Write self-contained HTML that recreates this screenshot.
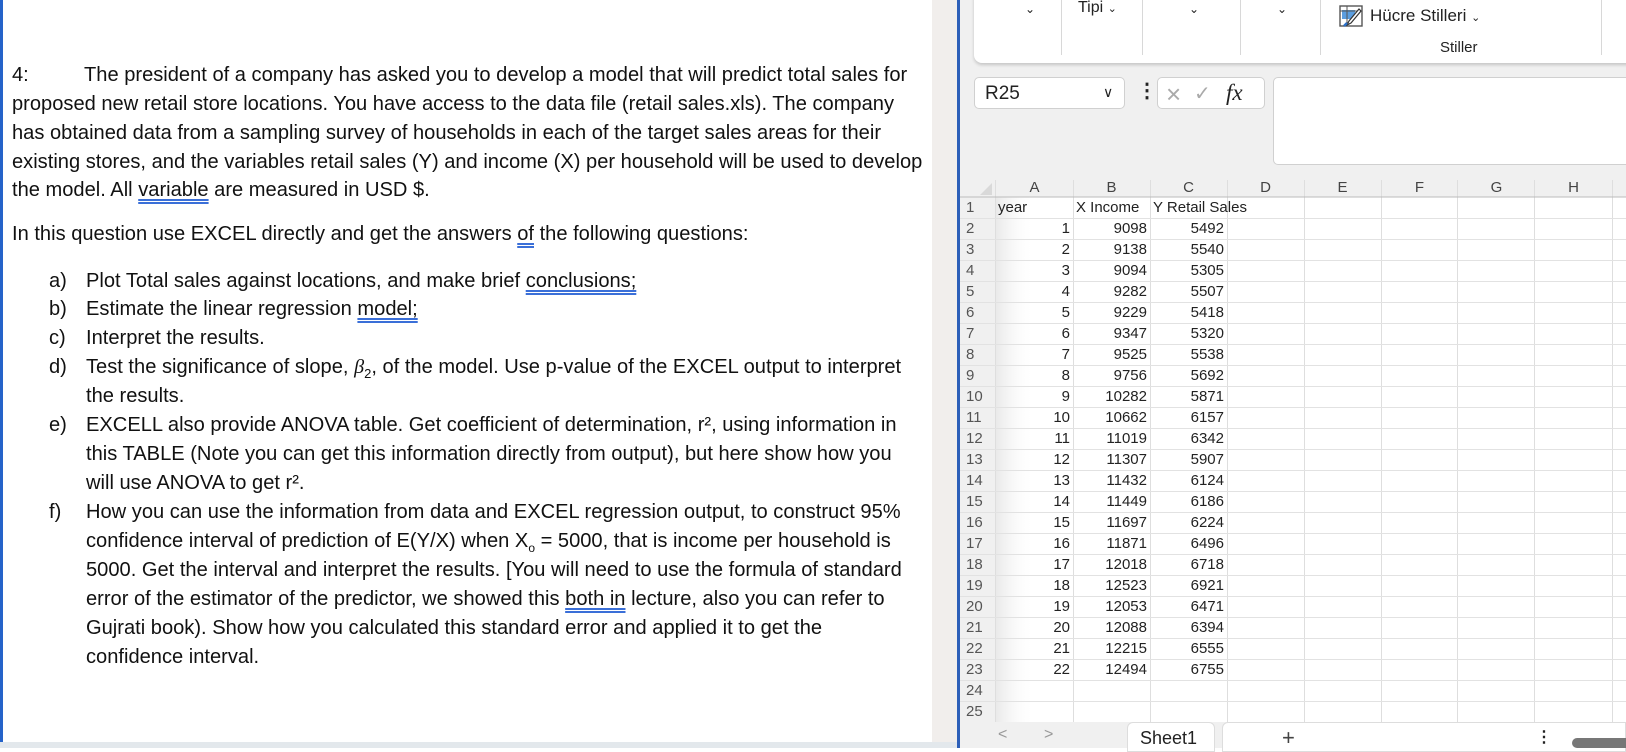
<!DOCTYPE html>
<html><head><meta charset="utf-8"><style>
*{margin:0;padding:0;box-sizing:border-box}
body{width:1626px;height:748px;overflow:hidden;position:relative;background:#fff;font-family:"Liberation Sans",sans-serif}
.doc{position:absolute;left:0;top:0;width:932px;height:742px;background:#fff;border-left:3px solid #2563c9}
.ln{position:absolute;white-space:nowrap;font-size:20.1px;color:#111;line-height:22px;letter-spacing:0}
.u{text-decoration:underline;text-decoration-color:#3a6fd8;text-decoration-style:double;text-underline-offset:3px}
.bot{position:absolute;left:0;top:742px;width:958px;height:6px;background:#e3e8ec}
.gap{position:absolute;left:932px;top:0;width:26px;height:742px;background:#f1eeec}
.blue{position:absolute;left:957px;top:0;width:3px;height:748px;background:#2d5fb8}
.xl{position:absolute;left:960px;top:0;width:666px;height:748px;background:#f0f0f0}
.rib{position:absolute;left:14px;top:-10px;width:700px;height:73px;background:#fff;border-radius:8px;box-shadow:0 2px 3px rgba(0,0,0,.18)}
.sep{position:absolute;top:0;width:1px;height:55px;background:#d8d8d8}
.rt{position:absolute;font-size:15px;color:#222;white-space:nowrap}
.box{position:absolute;background:#fff;border:1px solid #d0d0d0;border-radius:5px}
.grid{position:absolute;left:0;top:180px}
.cell{position:absolute;font-size:15px;color:#222;line-height:21px;white-space:nowrap}
</style></head><body>
<div class="doc">
<div class="ln" style="left:9px;top:64px">4:</div>
<div class="ln" style="left:81px;top:64px">The president of a company has asked you to develop a model that will predict total sales for</div>
<div class="ln" style="left:9px;top:93px">proposed new retail store locations. You have access to the data file (retail sales.xls). The company</div>
<div class="ln" style="left:9px;top:122px">has obtained data from a sampling survey of households in each of the target sales areas for their</div>
<div class="ln" style="left:9px;top:151px">existing stores, and the variables retail sales (Y) and income (X) per household will be used to develop</div>
<div class="ln" style="left:9px;top:179px">the model. All <span class="u">variable</span> are measured in USD $.</div>
<div class="ln" style="left:9px;top:223px">In this question use EXCEL directly and get the answers <span class="u">of</span> the following questions:</div>
<div class="ln" style="left:46px;top:270px">a)</div><div class="ln" style="left:83px;top:270px">Plot Total sales against locations, and make brief <span class="u">conclusions;</span></div>
<div class="ln" style="left:46px;top:298px">b)</div><div class="ln" style="left:83px;top:298px">Estimate the linear regression <span class="u">model;</span></div>
<div class="ln" style="left:46px;top:327px">c)</div><div class="ln" style="left:83px;top:327px">Interpret the results.</div>
<div class="ln" style="left:46px;top:356px">d)</div><div class="ln" style="left:83px;top:356px">Test the significance of slope, <i style="font-family:'Liberation Serif',serif">β</i><sub style="font-size:13px">2</sub>, of the model. Use p-value of the EXCEL output to interpret</div>
<div class="ln" style="left:83px;top:385px">the results.</div>
<div class="ln" style="left:46px;top:414px">e)</div><div class="ln" style="left:83px;top:414px">EXCELL also provide ANOVA table. Get coefficient of determination, r², using information in</div>
<div class="ln" style="left:83px;top:443px">this TABLE (Note you can get this information directly from output), but here show how you</div>
<div class="ln" style="left:83px;top:472px">will use ANOVA to get r².</div>
<div class="ln" style="left:46px;top:501px">f)</div><div class="ln" style="left:83px;top:501px">How you can use the information from data and EXCEL regression output, to construct 95%</div>
<div class="ln" style="left:83px;top:530px">confidence interval of prediction of E(Y/X) when X<sub style="font-size:12px">o</sub> = 5000, that is income per household is</div>
<div class="ln" style="left:83px;top:559px">5000. Get the interval and interpret the results. [You will need to use the formula of standard</div>
<div class="ln" style="left:83px;top:588px">error of the estimator of the predictor, we showed this <span class="u">both in</span> lecture, also you can refer to</div>
<div class="ln" style="left:83px;top:617px">Gujrati book). Show how you calculated this standard error and applied it to get the</div>
<div class="ln" style="left:83px;top:646px">confidence interval.</div>
</div>
<div class="gap"></div><div class="bot"></div>
<div class="xl">
 <div class="rib">
  <div class="rt" style="left:51px;top:12px;font-size:12px">⌄</div>
  <div class="sep" style="left:87px;top:10px"></div>
  <div class="rt" style="left:104px;top:9px;font-size:16px">Tipi <span style="font-size:11px">⌄</span></div>
  <div class="sep" style="left:168px;top:10px"></div>
  <div class="rt" style="left:215px;top:12px;font-size:12px">⌄</div>
  <div class="sep" style="left:266px;top:10px"></div>
  <div class="rt" style="left:303px;top:12px;font-size:12px">⌄</div>
  <div class="sep" style="left:346px;top:10px"></div>
  <svg style="position:absolute;left:365px;top:15px" width="24" height="22" viewBox="0 0 24 22"><rect x="1" y="1" width="22" height="20" fill="#fff" stroke="#555" stroke-width="1.4"/><rect x="3" y="5" width="13" height="9" fill="#5b9ee0"/><line x1="1" y1="6" x2="23" y2="6" stroke="#555"/><line x1="8" y1="1" x2="8" y2="21" stroke="#555"/><path d="M20 4 L10 16 L8 20 L12 18 L22 6Z" fill="#fff" stroke="#333" stroke-width="1.2"/><path d="M8 18 L5 21" stroke="#2a6fc8" stroke-width="2.5"/></svg>
  <div class="rt" style="left:396px;top:16px;font-size:17px">Hücre Stilleri <span style="font-size:11px">⌄</span></div>
  <div class="rt" style="left:466px;top:49px;font-size:15px">Stiller</div>
  <div class="sep" style="left:627px;top:10px"></div>
 </div>
 <div class="box" style="left:14px;top:77px;width:151px;height:32px"><span class="rt" style="left:10px;top:5px;font-size:19px">R25</span><span class="rt" style="left:128px;top:6px;font-size:14px">∨</span></div>
 <div class="rt" style="left:177px;top:78px;font-size:20px;font-weight:bold">⋮</div>
 <div class="box" style="left:197px;top:77px;width:108px;height:32px"><span class="rt" style="left:8px;top:1px;font-size:26px;color:#aaa">×</span><span class="rt" style="left:36px;top:3px;font-size:20px;color:#aaa">✓</span><span class="rt" style="left:68px;top:2px;font-size:23px;font-family:'Liberation Serif',serif;font-style:italic">fx</span></div>
 <div class="box" style="left:313px;top:77px;width:360px;height:88px"></div>
 <div class="grid">
  <svg width="666" height="542" style="position:absolute;left:0;top:0">
   <rect x="35" y="17" width="631" height="525" fill="#fff"/>
   <defs><linearGradient id="g" x1="0" x2="1"><stop offset="0" stop-color="#e8e8e8"/><stop offset="1" stop-color="#fff" stop-opacity="0"/></linearGradient></defs>
   <rect x="35" y="17" width="40" height="525" fill="url(#g)"/>
   <path d="M32 3 L32 15 L20 15Z" fill="#d9d9d9"/>
   <g stroke="#dedede" stroke-width="1">
   <line x1="113.5" y1="0" x2="113.5" y2="542"/><line x1="190.5" y1="0" x2="190.5" y2="542"/><line x1="267.5" y1="0" x2="267.5" y2="542"/><line x1="344.5" y1="0" x2="344.5" y2="542"/><line x1="421.5" y1="0" x2="421.5" y2="542"/><line x1="497.5" y1="0" x2="497.5" y2="542"/><line x1="574.5" y1="0" x2="574.5" y2="542"/><line x1="652.5" y1="0" x2="652.5" y2="542"/>
   <line x1="35.5" y1="0" x2="35.5" y2="542"/>
   </g>
   <line x1="0" y1="17" x2="666" y2="17" stroke="#bbb"/>
   <g stroke="#e2e2e2" id="rows"></g>
  </svg>
  <div id="cells"></div>
 </div>
 <div style="position:absolute;left:0;top:722px;width:666px;height:26px;background:#f0f0f0"></div>
 <div class="rt" style="left:38px;top:726px;font-size:16px;color:#999">&lt;</div>
 <div class="rt" style="left:84px;top:726px;font-size:16px;color:#999">&gt;</div>
 <div style="position:absolute;left:167px;top:722px;width:88px;height:30px;background:#fff;border-radius:6px 6px 0 0;border:1px solid #ddd"></div>
 <div class="rt" style="left:180px;top:728px;font-size:18px">Sheet1</div>
 <div style="position:absolute;left:262px;top:722px;width:404px;height:30px;background:#fff;border-radius:6px 0 0 0;border:1px solid #ddd"></div>
 <div class="rt" style="left:322px;top:725px;font-size:22px;font-weight:300;color:#444">+</div>
 <div class="rt" style="left:576px;top:727px;font-size:16px;font-weight:bold">⋮</div>
 <div style="position:absolute;left:612px;top:738px;width:60px;height:10px;background:#777;border-radius:5px"></div>
</div>
<div class="blue"></div>
<script>
var d=[[1,9098,5492],[2,9138,5540],[3,9094,5305],[4,9282,5507],[5,9229,5418],[6,9347,5320],[7,9525,5538],[8,9756,5692],[9,10282,5871],[10,10662,6157],[11,11019,6342],[12,11307,5907],[13,11432,6124],[14,11449,6186],[15,11697,6224],[16,11871,6496],[17,12018,6718],[18,12523,6921],[19,12053,6471],[20,12088,6394],[21,12215,6555],[22,12494,6755]];
var h='',r='';
var cols="ABCDEFGH";
for(var i=0;i<8;i++)h+='<div class="cell" style="left:'+(36+i*77)+'px;top:-3px;width:77px;text-align:center;color:#444">'+cols[i]+'</div>';
for(var k=1;k<=25;k++){var y=17+(k-1)*21;r+='<line x1="0" y1="'+(y+21.5)+'" x2="666" y2="'+(y+21.5)+'"/>';
h+='<div class="cell" style="left:6px;top:'+y+'px;color:#555">'+k+'</div>';}
h+='<div class="cell" style="left:38px;top:17px">year</div><div class="cell" style="left:116px;top:17px">X Income</div><div class="cell" style="left:193px;top:17px">Y Retail Sales</div>';
for(var j=0;j<d.length;j++){var y=17+(j+1)*21;
h+='<div class="cell" style="left:36px;top:'+y+'px;width:74px;text-align:right">'+d[j][0]+'</div>';
h+='<div class="cell" style="left:113px;top:'+y+'px;width:74px;text-align:right">'+d[j][1]+'</div>';
h+='<div class="cell" style="left:190px;top:'+y+'px;width:74px;text-align:right">'+d[j][2]+'</div>';}
document.getElementById('cells').innerHTML=h;document.getElementById('rows').innerHTML=r;
</script>
</body></html>
